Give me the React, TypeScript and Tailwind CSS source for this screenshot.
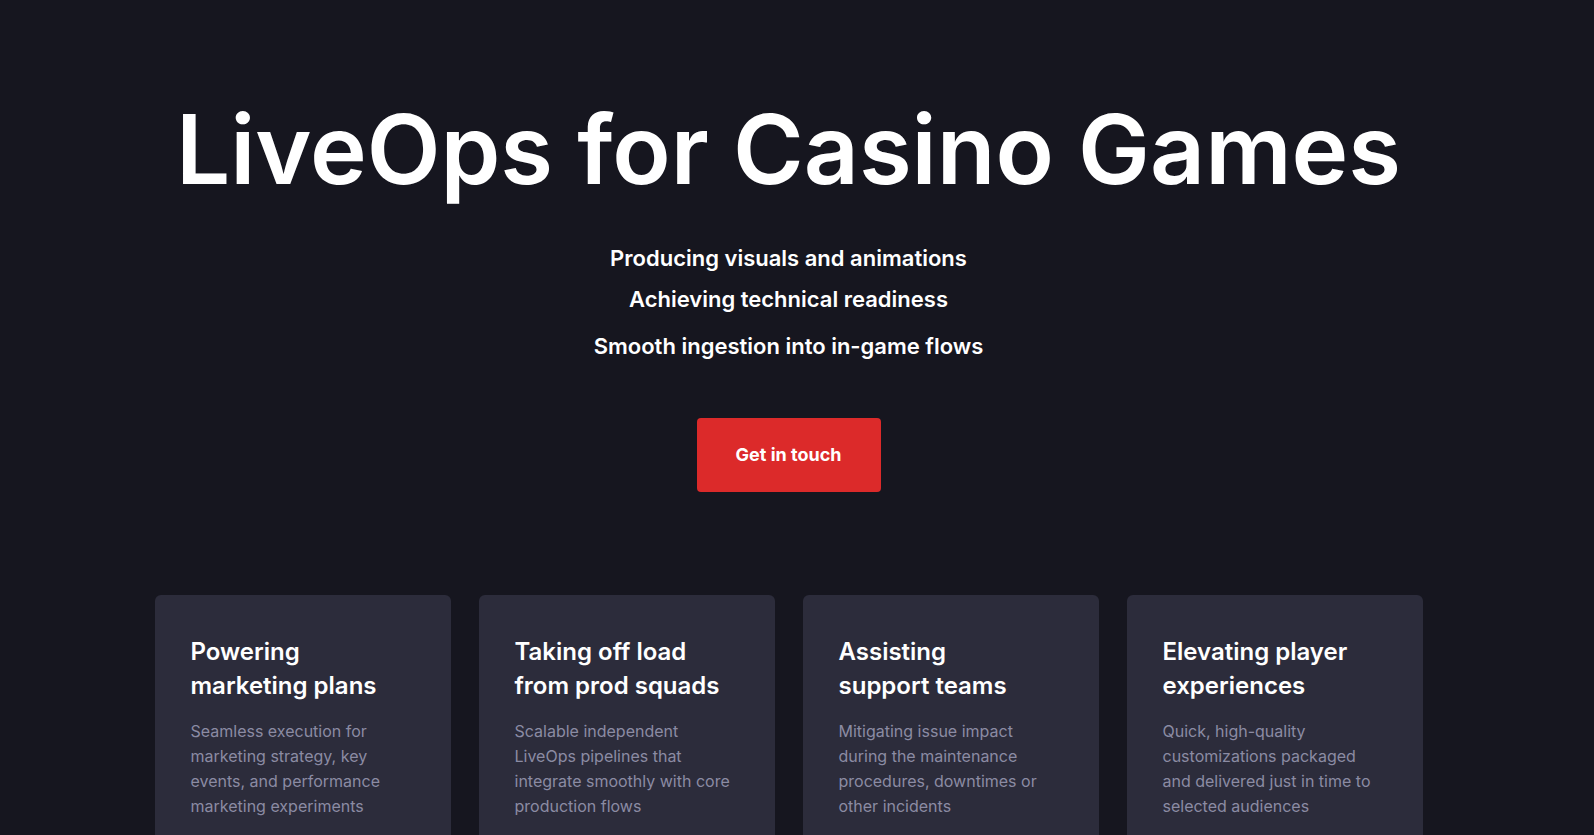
import React from 'react'

const cards = [
  {
    title: ['Powering', 'marketing plans'],
    text: 'Seamless execution for marketing strategy, key events, and performance marketing experiments',
  },
  {
    title: ['Taking off load', 'from prod squads'],
    text: 'Scalable independent LiveOps pipelines that integrate smoothly with core production flows',
  },
  {
    title: ['Assisting', 'support teams'],
    text: 'Mitigating issue impact during the maintenance procedures, downtimes or other incidents',
  },
  {
    title: ['Elevating player', 'experiences'],
    text: 'Quick, high-quality customizations packaged and delivered just in time to selected audiences',
  },
]

export default function App() {
  return (
    <div className="min-h-screen bg-[#16161f] pr-[17px] text-white [font-family:Inter,'Noto_Sans',sans-serif]">
      <Hero />
      <Cards />
    </div>
  )
}

function Hero() {
  return (
    <section className="flex flex-col items-center pt-[101px] text-center">
      <h1 className="text-[96px] font-semibold leading-none tracking-normal">LiveOps for Casino Games</h1>

      <div className="mt-[45px] flex flex-col items-center text-[22px] font-semibold leading-[32px]">
        <p>Producing visuals and animations</p>
        <p className="mt-[8.7px]">Achieving technical readiness</p>
        <p className="mt-[15px]">Smooth ingestion into in-game flows</p>
      </div>

      <button className="mt-[56px] flex h-[74px] w-[184px] items-center justify-center rounded-[4px] bg-[#dc2a2a] text-[18px] font-bold">
        Get in touch
      </button>
    </section>
  )
}

function Cards() {
  return (
    <section className="mx-auto mt-[103px] grid w-[1268px] grid-cols-4 gap-[28px]">
      {cards.map(c => (
        <div key={c.title[0]} className="h-[300px] rounded-md bg-[#2c2c3b] px-9 pt-10">
          <h3 className="text-[24px] font-semibold leading-[34px]">
            {c.title[0]}
            <br />
            {c.title[1]}
          </h3>
          <p className="mt-4 text-[16px] leading-[25px] text-[#8b8ba3]">{c.text}</p>
        </div>
      ))}
    </section>
  )
}
